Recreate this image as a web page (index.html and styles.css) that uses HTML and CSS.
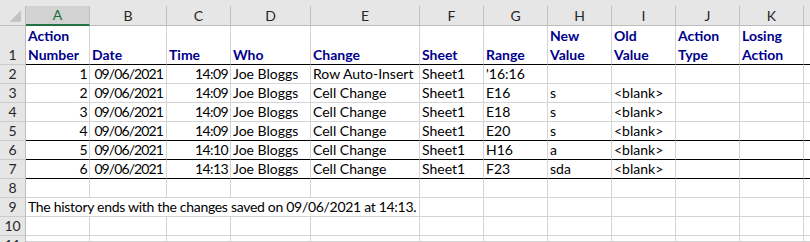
FILE: index.html
```html
<!DOCTYPE html>
<html>
<head>
<meta charset="utf-8">
<link rel="stylesheet" href="styles.css">
</head>
<body>
<div class="sheet">
  <div class="strip"></div>

  <div class="corner"><svg width="26" height="20" viewBox="0 0 26 20"><polygon points="10,16 22,16 22,4" fill="#c2c2c2"/></svg></div>
  <div class="ch sel">A</div>
  <div class="ch">B</div>
  <div class="ch">C</div>
  <div class="ch">D</div>
  <div class="ch">E</div>
  <div class="ch">F</div>
  <div class="ch">G</div>
  <div class="ch">H</div>
  <div class="ch">I</div>
  <div class="ch">J</div>
  <div class="ch">K</div>
  <div class="ch"></div>

  <div class="rh">1</div>
  <div class="c hd bk">Action<br>Number</div>
  <div class="c hd bk">Date</div>
  <div class="c hd bk">Time</div>
  <div class="c hd bk">Who</div>
  <div class="c hd bk">Change</div>
  <div class="c hd bk">Sheet</div>
  <div class="c hd bk">Range</div>
  <div class="c hd bk">New<br>Value</div>
  <div class="c hd bk">Old<br>Value</div>
  <div class="c hd bk">Action<br>Type</div>
  <div class="c hd bk">Losing<br>Action</div>
  <div class="c bk"></div>

  <div class="rh">2</div>
  <div class="c r n">1</div>
  <div class="c r n d">09/06/2021</div>
  <div class="c r n">14:09</div>
  <div class="c">Joe Bloggs</div>
  <div class="c">Row Auto-Insert</div>
  <div class="c">Sheet1</div>
  <div class="c">'16:16</div>
  <div class="c"></div>
  <div class="c"></div>
  <div class="c"></div>
  <div class="c"></div>
  <div class="c"></div>

  <div class="rh">3</div>
  <div class="c r n">2</div>
  <div class="c r n d">09/06/2021</div>
  <div class="c r n">14:09</div>
  <div class="c">Joe Bloggs</div>
  <div class="c">Cell Change</div>
  <div class="c">Sheet1</div>
  <div class="c">E16</div>
  <div class="c">s</div>
  <div class="c">&lt;blank&gt;</div>
  <div class="c"></div>
  <div class="c"></div>
  <div class="c"></div>

  <div class="rh">4</div>
  <div class="c r n">3</div>
  <div class="c r n d">09/06/2021</div>
  <div class="c r n">14:09</div>
  <div class="c">Joe Bloggs</div>
  <div class="c">Cell Change</div>
  <div class="c">Sheet1</div>
  <div class="c">E18</div>
  <div class="c">s</div>
  <div class="c">&lt;blank&gt;</div>
  <div class="c"></div>
  <div class="c"></div>
  <div class="c"></div>

  <div class="rh">5</div>
  <div class="c r n bk">4</div>
  <div class="c r n d bk">09/06/2021</div>
  <div class="c r n bk">14:09</div>
  <div class="c bk">Joe Bloggs</div>
  <div class="c bk">Cell Change</div>
  <div class="c bk">Sheet1</div>
  <div class="c bk">E20</div>
  <div class="c bk">s</div>
  <div class="c bk">&lt;blank&gt;</div>
  <div class="c bk"></div>
  <div class="c bk"></div>
  <div class="c bk"></div>

  <div class="rh">6</div>
  <div class="c r n bk">5</div>
  <div class="c r n d bk">09/06/2021</div>
  <div class="c r n bk">14:10</div>
  <div class="c bk">Joe Bloggs</div>
  <div class="c bk">Cell Change</div>
  <div class="c bk">Sheet1</div>
  <div class="c bk">H16</div>
  <div class="c bk">a</div>
  <div class="c bk">&lt;blank&gt;</div>
  <div class="c bk"></div>
  <div class="c bk"></div>
  <div class="c bk"></div>

  <div class="rh">7</div>
  <div class="c r n bk">6</div>
  <div class="c r n d bk">09/06/2021</div>
  <div class="c r n bk">14:13</div>
  <div class="c bk">Joe Bloggs</div>
  <div class="c bk">Cell Change</div>
  <div class="c bk">Sheet1</div>
  <div class="c bk">F23</div>
  <div class="c bk">sda</div>
  <div class="c bk">&lt;blank&gt;</div>
  <div class="c bk"></div>
  <div class="c bk"></div>
  <div class="c bk"></div>

  <div class="rh">8</div>
  <div class="c"></div><div class="c"></div><div class="c"></div><div class="c"></div><div class="c"></div><div class="c"></div><div class="c"></div><div class="c"></div><div class="c"></div><div class="c"></div><div class="c"></div><div class="c"></div>

  <div class="rh">9</div>
  <div class="c span5 note">The history ends with the changes saved on 09/06/2021 at 14:13.</div>
  <div class="c"></div><div class="c"></div><div class="c"></div><div class="c"></div><div class="c"></div><div class="c"></div><div class="c"></div>

  <div class="rh">10</div>
  <div class="c"></div><div class="c"></div><div class="c"></div><div class="c"></div><div class="c"></div><div class="c"></div><div class="c"></div><div class="c"></div><div class="c"></div><div class="c"></div><div class="c"></div><div class="c"></div>

  <div class="rh last">11</div>
  <div class="c"></div><div class="c"></div><div class="c"></div><div class="c"></div><div class="c"></div><div class="c"></div><div class="c"></div><div class="c"></div><div class="c"></div><div class="c"></div><div class="c"></div><div class="c"></div>
</div>
</body>
</html>
```
FILE: styles.css
```css
html, body {
  margin: 0;
  padding: 0;
  background: #ffffff;
  overflow: hidden;
}
body {
  width: 810px;
  height: 242px;
}
.sheet {
  display: grid;
  grid-template-columns: 26px 64px 77px 64px 80px 109px 64px 64px 64px 64px 64px 64px 64px;
  grid-template-rows: 6px 20px 39px repeat(9, 19px) 6px;
  font-family: Lato, "Liberation Sans", sans-serif;
  font-size: 14px;
  color: #000;
  width: 868px;
  overflow: hidden;
}
.strip {
  grid-column: 1 / -1;
  background: #e6e6e6;
}
.corner {
  background: #e6e6e6;
  border-right: 1px solid #bdbdbd;
  border-bottom: 1px solid #bdbdbd;
  box-sizing: border-box;
  display: flex;
}
.ch {
  background: #e6e6e6;
  border-right: 1px solid #c0c0c0;
  border-bottom: 1px solid #bdbdbd;
  box-sizing: border-box;
  text-align: center;
  line-height: 19px;
  color: #262626;
}
.ch.sel {
  background: #d2d2d2;
  color: #1d6b40;
  border-bottom: 2px solid #217346;
  line-height: 18px;
}
.rh {
  background: #e6e6e6;
  border-right: 1px solid #bdbdbd;
  border-bottom: 1px solid #cbcbcb;
  box-sizing: border-box;
  color: #262626;
  display: flex;
  align-items: flex-end;
  justify-content: center;
  line-height: 18px;
  overflow: hidden;
}
.rh.last {
  align-items: flex-start;
  border-bottom: none;
}
.c {
  border-right: 1px solid #d4d4d4;
  border-bottom: 1px solid #d4d4d4;
  box-sizing: border-box;
  padding: 0 2px;
  white-space: nowrap;
  line-height: 18px;
  display: flex;
  flex-direction: column;
  justify-content: flex-end;
}
.c.r {
  align-items: flex-end;
  text-align: right;
}
.c.n {
  letter-spacing: -0.6px;
  padding-right: 2px;
}
.c.d {
  letter-spacing: -0.9px;
  padding-right: 3px;
}
.c.note {
  letter-spacing: -0.3px;
}
.c.hd {
  font-weight: bold;
  color: #00008b;
  line-height: 19px;
}
.c.bk {
  border-bottom-color: #000;
}
.c.span5 {
  grid-column: span 5;
}
```
